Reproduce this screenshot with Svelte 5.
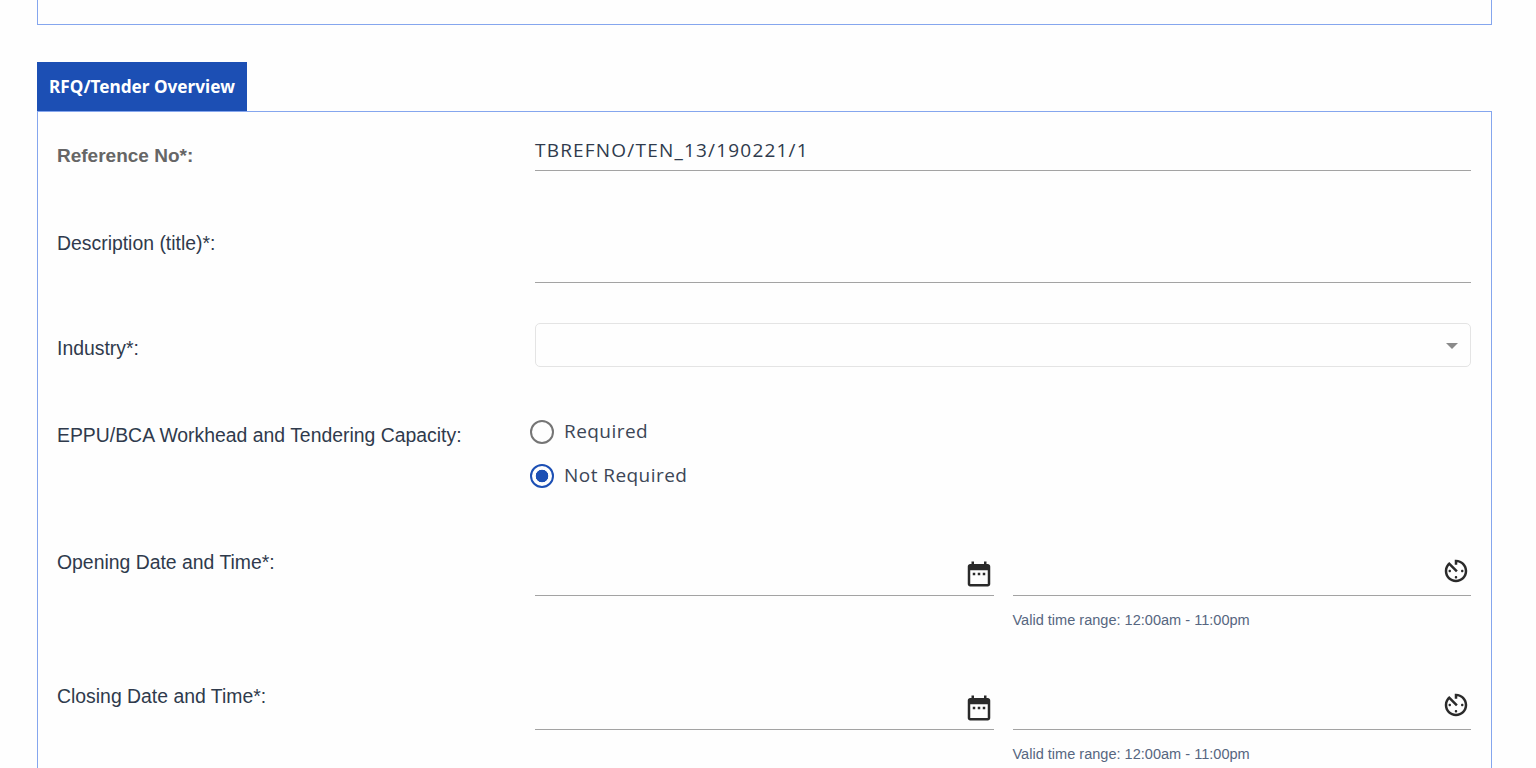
<script>
  const timeHint = "Valid time range: 12:00am - 11:00pm";
  const dateRange = "M9 11H7v2h2v-2zm4 0h-2v2h2v-2zm4 0h-2v2h2v-2zm2-7h-1V2h-2v2H8V2H6v2H5c-1.11 0-1.99.9-1.99 2L3 20c0 1.1.89 2 2 2h14c1.1 0 2-.9 2-2V6c0-1.1-.9-2-2-2zm0 16H5V9h14v11z";
  const avTimer = "M11 17c0 .55.45 1 1 1s1-.45 1-1-.45-1-1-1-1 .45-1 1zm0-14v4h2V5.08c3.39.49 6 3.39 6 6.92 0 3.87-3.13 7-7 7s-7-3.13-7-7c0-1.68.59-3.22 1.58-4.42L12 13l1.41-1.41-6.8-6.8v.02C4.42 6.45 3 9.05 3 12c0 4.97 4.02 9 9 9 4.97 0 9-4.03 9-9s-4.03-9-9-9h-1zm7 9c0-.55-.45-1-1-1s-1 .45-1 1 .45 1 1 1 1-.45 1-1zM6 12c0 .55.45 1 1 1s1-.45 1-1-.45-1-1-1-1 .45-1 1z";
  const schedule = ["Opening Date and Time*:", "Closing Date and Time*:"];
</script>

<div class="page">
  <div class="prev-panel"></div>

  <div class="tab">RFQ/Tender Overview</div>

  <div class="panel">
    <div class="row row-ref">
      <div class="label strong">Reference No*:</div>
      <div class="input">TBREFNO/TEN_13/190221/1</div>
    </div>

    <div class="row row-desc">
      <div class="label">Description (title)*:</div>
      <div class="input"></div>
    </div>

    <div class="row row-industry">
      <div class="label">Industry*:</div>
      <div class="select"><span class="caret"></span></div>
    </div>

    <div class="row row-radio">
      <div class="label">EPPU/BCA Workhead and Tendering Capacity:</div>
      <div class="radios">
        <div class="radio-line"><span class="radio"></span><span class="radio-text">Required</span></div>
        <div class="radio-line"><span class="radio on"></span><span class="radio-text">Not Required</span></div>
      </div>
    </div>

    {#each schedule as title}
      <div class="row row-date">
        <div class="label">{title}</div>
        <div class="pair">
          <div class="input picker cal">
            <svg viewBox="0 0 24 24"><path d={dateRange} /></svg>
          </div>
          <div>
            <div class="input picker">
              <svg viewBox="0 0 24 24"><path d={avTimer} /></svg>
            </div>
            <div class="hint">{timeHint}</div>
          </div>
        </div>
      </div>
    {/each}
  </div>
</div>

<style>
  :global(body) {
    background: #fefefe;
    overflow: hidden;
  }
  .page {
    height: 768px;
    overflow: hidden;
    padding: 0 44px 0 37px;
    box-sizing: border-box;
  }
  .prev-panel {
    height: 24px;
    border: 1px solid #85a6ee;
    border-top: none;
  }
  .tab {
    margin-top: 37px;
    width: 210px;
    height: 49px;
    background: #1c4fb4;
    color: #fff;
    font: 700 17.2px/49px "Noto Sans", sans-serif;
    text-align: center;
    box-sizing: border-box;
  }
  .panel {
    border: 1px solid #85a6ee;
    padding: 20px 20px 0 19px;
  }
  .row {
    display: grid;
    grid-template-columns: 478px 1fr;
  }
  .label {
    font: 19.4px/22px "Liberation Sans", Arial, sans-serif;
    color: #2f3a4c;
  }
  .label.strong {
    font-size: 19px;
    font-weight: 700;
    color: #666;
  }
  .input {
    border-bottom: 1px solid #a3a3a3;
    box-sizing: border-box;
    font: 19px/36px "Open Sans", sans-serif;
    letter-spacing: 1.2px;
    color: #2f3a4c;
  }
  .row-ref { height: 39px; }
  .row-ref .label { padding-top: 13px; }
  .row-ref .input { height: 39px; }

  .row-desc { height: 112px; align-items: end; }
  .row-desc .label { align-self: start; padding-top: 61px; }
  .row-desc .input { height: 40px; }

  .row-industry { margin-top: 40px; height: 44px; }
  .row-industry .label { padding-top: 14px; }
  .select {
    height: 44px;
    box-sizing: border-box;
    border: 1px solid #e4e4e4;
    border-radius: 5px;
    position: relative;
  }
  .caret {
    position: absolute;
    right: 12px;
    top: 19px;
    border: 6px solid transparent;
    border-top: 6px solid #8a8a8a;
    border-bottom: none;
  }

  .row-radio { margin-top: 44px; height: 131px; }
  .row-radio .label { padding-top: 13px; }
  .radios { margin-left: -5px; margin-top: -1px; }
  .radio-line {
    display: flex;
    align-items: center;
    gap: 10px;
    height: 44px;
    font: 19px/24px "Open Sans", sans-serif;
    letter-spacing: 0.45px;
    color: #3c4656;
  }
  .radio-text { padding-bottom: 2px; }
  .radio {
    width: 24px;
    height: 24px;
    box-sizing: border-box;
    border: 2px solid #757575;
    border-radius: 50%;
    flex: none;
  }
  .radio.on {
    border-color: #1c4fb4;
    background: radial-gradient(circle, #1c4fb4 0 6px, transparent 6.6px);
  }

  .row-date { height: 134px; }
  .row-date .label { padding-top: 9px; }
  .pair {
    display: grid;
    grid-template-columns: 1fr 1fr;
    gap: 19px;
    align-items: start;
  }
  .picker {
    height: 54px;
    display: flex;
    justify-content: flex-end;
    align-items: flex-end;
    padding: 0 0 9px;
  }
  .picker svg {
    width: 30px;
    height: 30px;
    fill: #2a2a2a;
  }
  .cal svg { margin-bottom: -3px; }
  .hint {
    margin-top: 15px;
    font: 14.55px/18px "Liberation Sans", Arial, sans-serif;
    color: #566680;
  }
</style>
